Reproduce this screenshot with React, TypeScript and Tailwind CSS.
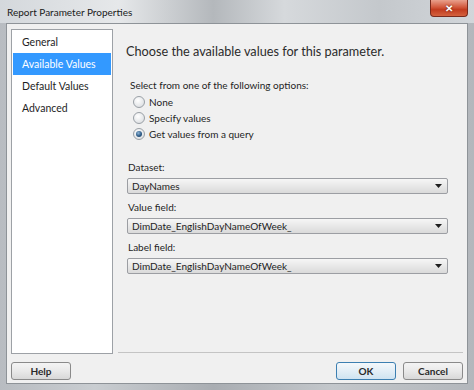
import React from "react";

const font = { fontFamily: 'Lato, "Noto Sans", sans-serif' };

function Radio({ checked }: { checked?: boolean }) {
  return (
    <span className="relative flex h-[12px] w-[12px] items-center justify-center rounded-full border border-[#9aa0a6] bg-[radial-gradient(circle_at_40%_35%,#ffffff,#e6e8ea_60%,#d3d7db)]">
      {checked && (
        <span className="h-[6px] w-[6px] rounded-full bg-[radial-gradient(circle_at_40%_35%,#8fb6d8,#2e5b86_55%,#1c3b5c)]" />
      )}
    </span>
  );
}

function Select({ value }: { value: string }) {
  return (
    <div className="ml-[9px] mt-[3px] flex h-[16px] w-[321px] items-center justify-between rounded-[2px] border border-[#9c9ea3] bg-[linear-gradient(to_bottom,#f6f6f6,#e8e8e8_50%,#dadada)] pl-[4px] pr-[5px] text-[10px] leading-none text-[#1e1e1e]">
      <span>{value}</span>
      <svg width="7" height="4" viewBox="0 0 7 4">
        <path d="M0 0 L7 0 L3.5 4 Z" fill="#1f1f1f" />
      </svg>
    </div>
  );
}

function Button({ label, def }: { label: string; def?: boolean }) {
  return (
    <div
      className={
        "flex h-[18px] w-[60px] items-center justify-center rounded-[3px] border text-[10px] font-bold leading-none text-[#2a2a2a] " +
        (def
          ? "border-[#3c7fb1] bg-[linear-gradient(to_bottom,#f4f8fb,#e3eef6_50%,#cfe3f1)]"
          : "border-[#8a8a8a] bg-[linear-gradient(to_bottom,#f4f4f4,#e9e9e9_50%,#d8d8d8)]")
      }
    >
      {label}
    </div>
  );
}

export default function App() {
  const items = ["General", "Available Values", "Default Values", "Advanced"];
  return (
    <div
      style={font}
      className="flex h-[390px] w-[474px] flex-col overflow-hidden bg-[linear-gradient(to_right,#b8bcc1,#c9cdd1_20%,#a9adb2_45%,#c3c7cb_70%,#b3b7bc)]"
    >
      {/* title bar */}
      <div className="flex h-[23px] items-start justify-between bg-[linear-gradient(to_right,#d4d8dc,#e6e8ea_25%,#b4b8bc_45%,#d6d9dc_60%,#c4c8cc_80%,#d2d6da)]">
        <div className="pl-[7px] pt-[5px] text-[10px] leading-[14px] text-[#1a1a1a]">Report Parameter Properties</div>
        <div className="mr-[6px] flex h-[17px] w-[38px] items-center justify-center rounded-b-[4px] border border-t-0 border-[#7a2a1c] bg-[linear-gradient(to_bottom,#e9a08c,#d2583c_45%,#c23c1f_60%,#d4623f)]">
          <span className="text-[10px] font-bold leading-none text-white [text-shadow:0_0_2px_#5a1a10]">✕</span>
        </div>
      </div>

      {/* client area */}
      <div className="mx-[6px] mb-[6px] flex flex-1 flex-col border border-[#8e9398] bg-[#f0f0f0]">
        <div className="flex h-[331px]">
          {/* list */}
          <div className="ml-[4px] mt-[5px] h-[325px] w-[102px] border border-[#9da1a6] bg-white pt-[1px]">
            {items.map((it, i) => (
              <div
                key={it}
                className={
                  "mx-[1px] flex h-[22px] items-center pl-[9px] text-[10.5px] leading-none " +
                  (i === 1 ? "bg-[#3399ff] text-white" : "text-[#1e1e1e]")
                }
              >
                {it}
              </div>
            ))}
          </div>

          {/* right panel */}
          <div className="ml-[5px] mr-[4px] flex h-[329px] flex-1 flex-col border-b border-[#c4c4c4]">
            <div className="ml-[8px] mt-[17px] h-[20px] text-[12.7px] leading-[20px] text-[#2b2b2b]">
              Choose the available values for this parameter.
            </div>
            <div className="ml-[12px] mt-[17px] h-[15px] text-[10px] leading-[15px] text-[#1e1e1e]">
              Select from one of the following options:
            </div>
            <div className="ml-[15px] mt-[1px] flex flex-col">
              {[
                ["None", false],
                ["Specify values", false],
                ["Get values from a query", true],
              ].map(([l, c]) => (
                <div key={l as string} className="flex h-[16px] items-center gap-[4px] text-[10px] text-[#1e1e1e]">
                  <Radio checked={c as boolean} />
                  <span>{l as string}</span>
                </div>
              ))}
            </div>
            <div className="ml-[10px] mt-[18px] h-[15px] text-[10px] leading-[15px] text-[#1e1e1e]">Dataset:</div>
            <Select value="DayNames" />
            <div className="ml-[10px] mt-[6px] h-[15px] text-[10px] leading-[15px] text-[#1e1e1e]">Value field:</div>
            <Select value="DimDate_EnglishDayNameOfWeek_" />
            <div className="ml-[10px] mt-[6px] h-[15px] text-[10px] leading-[15px] text-[#1e1e1e]">Label field:</div>
            <Select value="DimDate_EnglishDayNameOfWeek_" />
          </div>
        </div>

        {/* buttons */}
        <div className="mt-[7px] flex items-center justify-between px-[4px]">
          <Button label="Help" />
          <div className="flex gap-[7px]">
            <Button label="OK" def />
            <Button label="Cancel" />
          </div>
        </div>
      </div>
    </div>
  );
}
